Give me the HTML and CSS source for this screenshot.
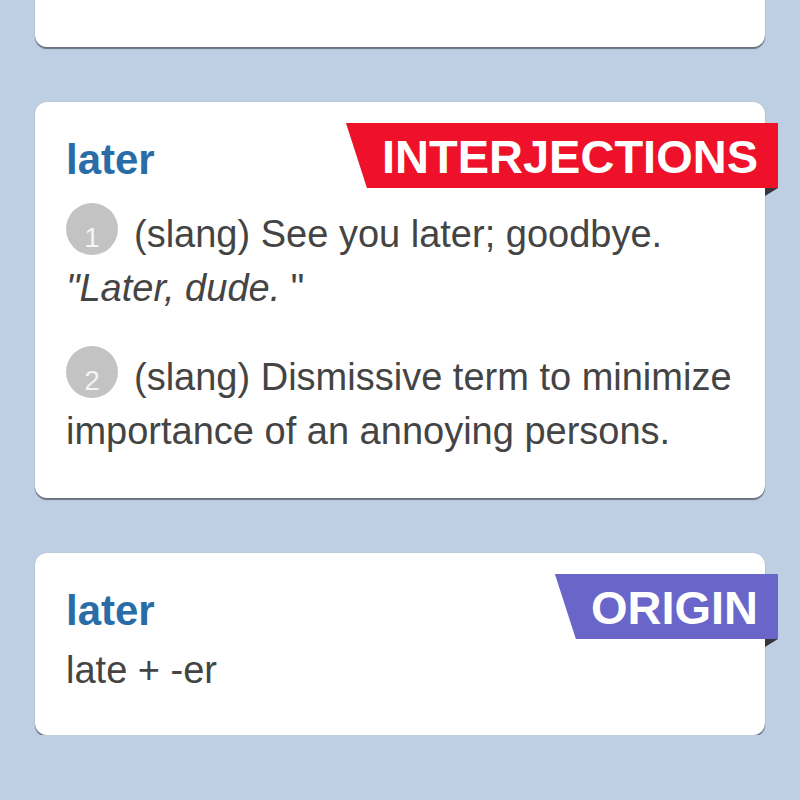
FILE: index.html
```html
<!DOCTYPE html>
<html lang="en">
<head>
    <meta charset="UTF-8">
    <meta name="viewport" content="width=device-width, initial-scale=1.0">
    <title>later</title>
    <link rel="stylesheet" href="styles.css">
</head>
<body>
    <main class="entries">
        <section class="card stub"></section>

        <section class="card">
            <div class="tag red"><span class="tag-text">INTERJECTIONS</span></div>
            <h2 class="word">later</h2>
            <p class="sense first"><span class="num">1</span>(slang) See you later; goodbye.<br><em>"Later, dude.</em> "</p>
            <p class="sense"><span class="num">2</span>(slang) Dismissive term to minimize importance of an annoying persons.</p>
        </section>

        <section class="card short">
            <div class="tag purple"><span class="tag-text">ORIGIN</span></div>
            <h2 class="word">later</h2>
            <p class="origin">late + -er</p>
        </section>
    </main>
</body>
</html>
```

FILE: styles.css
```css
body {
    margin: 0;
    background-color: #bfcfe3;
    font-family: 'Liberation Sans', Arial, sans-serif;
    color: #444444;
    overflow: hidden;
}
.entries {
    display: flex;
    flex-direction: column;
    gap: 55px;
    padding: 0 35px;
}
.card {
    position: relative;
    background: #ffffff;
    border-radius: 12px;
    box-shadow: 0 2px 1px #69727e, 0 0 1px rgba(90, 110, 140, 0.35);
    padding: 34px 31px 40px;
}
.card.short {
    padding-bottom: 38px;
}
.card.stub {
    height: 100px;
    margin-top: -53px;
    padding: 0;
}
.word {
    margin: 0;
    font-size: 42px;
    line-height: 48px;
    font-weight: bold;
    color: #2a6ca7;
}
.sense {
    margin: 31px 0 0;
    font-size: 38px;
    line-height: 54px;
}
.sense.first {
    margin-top: 19px;
}
.sense em {
    font-style: italic;
}
.num {
    display: inline-block;
    box-sizing: border-box;
    width: 52px;
    height: 52px;
    padding-top: 21px;
    margin-right: 16px;
    border-radius: 50%;
    background: #c3c3c3;
    color: #f4f4f4;
    font-size: 28px;
    line-height: 28px;
    text-align: center;
}
.origin {
    margin: 8px 0 0;
    font-size: 38px;
    line-height: 54px;
}

/* label ribbon hanging over the right edge */
.tag {
    position: absolute;
    top: 21px;
    right: -13px;
    height: 65px;
}
.tag-text {
    display: block;
    height: 65px;
    box-sizing: border-box;
    padding: 2px 20px 0 36px;
    font-size: 47px;
    line-height: 63px;
    font-weight: bold;
    color: #ffffff;
    clip-path: polygon(0 0, 100% 0, 100% 100%, 21px 100%);
}
.tag::after {
    content: '';
    position: absolute;
    right: 0;
    top: 100%;
    width: 13px;
    height: 8px;
    background: #34363a;
    clip-path: polygon(0 0, 100% 0, 0 100%);
}
.tag.red .tag-text {
    background: #ee1129;
}
.tag.purple .tag-text {
    background: #6a66c9;
}
```
